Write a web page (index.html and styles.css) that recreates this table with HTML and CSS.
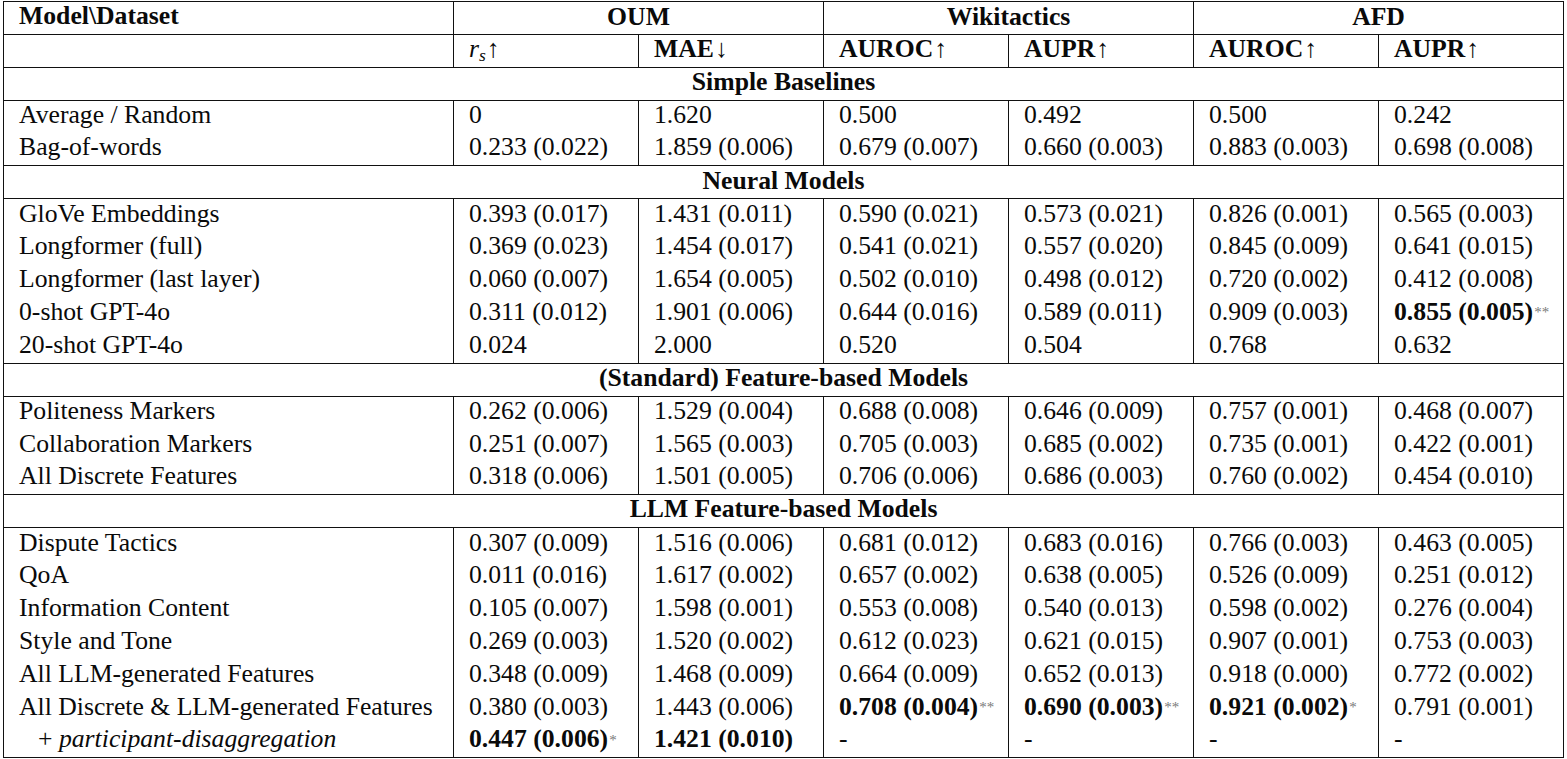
FILE: index.html
```html
<!DOCTYPE html>
<html>
<head>
<meta charset="utf-8">
<link rel="stylesheet" href="styles.css">
</head>
<body>
<table class="results">
  <colgroup>
    <col class="c-model">
    <col class="c-val"><col class="c-val"><col class="c-val"><col class="c-val"><col class="c-val"><col class="c-val">
  </colgroup>
  <tbody>
    <tr class="head">
      <th class="left vr">Model\Dataset</th>
      <th colspan="2" class="center vr">OUM</th>
      <th colspan="2" class="center vr">Wikitactics</th>
      <th colspan="2" class="center">AFD</th>
    </tr>
    <tr class="head sub">
      <th class="vr"></th>
      <th class="vr plain"><i>r</i><sub><i>s</i></sub><span class="arr">↑</span></th>
      <th class="vr">MAE<span class="arr">↓</span></th>
      <th class="vr">AUROC<span class="arr">↑</span></th>
      <th class="vr">AUPR<span class="arr">↑</span></th>
      <th class="vr">AUROC<span class="arr">↑</span></th>
      <th>AUPR<span class="arr">↑</span></th>
    </tr>

    <tr class="section"><td colspan="7">Simple Baselines</td></tr>
    <tr><td>Average / Random</td><td>0</td><td>1.620</td><td>0.500</td><td>0.492</td><td>0.500</td><td>0.242</td></tr>
    <tr><td>Bag-of-words</td><td>0.233 (0.022)</td><td>1.859 (0.006)</td><td>0.679 (0.007)</td><td>0.660 (0.003)</td><td>0.883 (0.003)</td><td>0.698 (0.008)</td></tr>

    <tr class="section"><td colspan="7">Neural Models</td></tr>
    <tr><td>GloVe Embeddings</td><td>0.393 (0.017)</td><td>1.431 (0.011)</td><td>0.590 (0.021)</td><td>0.573 (0.021)</td><td>0.826 (0.001)</td><td>0.565 (0.003)</td></tr>
    <tr><td>Longformer (full)</td><td>0.369 (0.023)</td><td>1.454 (0.017)</td><td>0.541 (0.021)</td><td>0.557 (0.020)</td><td>0.845 (0.009)</td><td>0.641 (0.015)</td></tr>
    <tr><td>Longformer (last layer)</td><td>0.060 (0.007)</td><td>1.654 (0.005)</td><td>0.502 (0.010)</td><td>0.498 (0.012)</td><td>0.720 (0.002)</td><td>0.412 (0.008)</td></tr>
    <tr><td>0-shot GPT-4o</td><td>0.311 (0.012)</td><td>1.901 (0.006)</td><td>0.644 (0.016)</td><td>0.589 (0.011)</td><td>0.909 (0.003)</td><td><b>0.855 (0.005)</b><span class="sig">**</span></td></tr>
    <tr><td>20-shot GPT-4o</td><td>0.024</td><td>2.000</td><td>0.520</td><td>0.504</td><td>0.768</td><td>0.632</td></tr>

    <tr class="section"><td colspan="7">(Standard) Feature-based Models</td></tr>
    <tr><td>Politeness Markers</td><td>0.262 (0.006)</td><td>1.529 (0.004)</td><td>0.688 (0.008)</td><td>0.646 (0.009)</td><td>0.757 (0.001)</td><td>0.468 (0.007)</td></tr>
    <tr><td>Collaboration Markers</td><td>0.251 (0.007)</td><td>1.565 (0.003)</td><td>0.705 (0.003)</td><td>0.685 (0.002)</td><td>0.735 (0.001)</td><td>0.422 (0.001)</td></tr>
    <tr><td>All Discrete Features</td><td>0.318 (0.006)</td><td>1.501 (0.005)</td><td>0.706 (0.006)</td><td>0.686 (0.003)</td><td>0.760 (0.002)</td><td>0.454 (0.010)</td></tr>

    <tr class="section"><td colspan="7">LLM Feature-based Models</td></tr>
    <tr><td>Dispute Tactics</td><td>0.307 (0.009)</td><td>1.516 (0.006)</td><td>0.681 (0.012)</td><td>0.683 (0.016)</td><td>0.766 (0.003)</td><td>0.463 (0.005)</td></tr>
    <tr><td>QoA</td><td>0.011 (0.016)</td><td>1.617 (0.002)</td><td>0.657 (0.002)</td><td>0.638 (0.005)</td><td>0.526 (0.009)</td><td>0.251 (0.012)</td></tr>
    <tr><td>Information Content</td><td>0.105 (0.007)</td><td>1.598 (0.001)</td><td>0.553 (0.008)</td><td>0.540 (0.013)</td><td>0.598 (0.002)</td><td>0.276 (0.004)</td></tr>
    <tr><td>Style and Tone</td><td>0.269 (0.003)</td><td>1.520 (0.002)</td><td>0.612 (0.023)</td><td>0.621 (0.015)</td><td>0.907 (0.001)</td><td>0.753 (0.003)</td></tr>
    <tr><td>All LLM-generated Features</td><td>0.348 (0.009)</td><td>1.468 (0.009)</td><td>0.664 (0.009)</td><td>0.652 (0.013)</td><td>0.918 (0.000)</td><td>0.772 (0.002)</td></tr>
    <tr><td>All Discrete &amp; LLM-generated Features</td><td>0.380 (0.003)</td><td>1.443 (0.006)</td><td><b>0.708 (0.004)</b><span class="sig">**</span></td><td><b>0.690 (0.003)</b><span class="sig">**</span></td><td><b>0.921 (0.002)</b><span class="sig">*</span></td><td>0.791 (0.001)</td></tr>
    <tr class="last"><td class="indent"><span class="plus">+</span> <i>participant-disaggregation</i></td><td><b>0.447 (0.006)</b><span class="sig">*</span></td><td><b>1.421 (0.010)</b></td><td>-</td><td>-</td><td>-</td><td>-</td></tr>
  </tbody>
</table>
</body>
</html>
```

FILE: styles.css
```css
html, body {
  margin: 0;
  padding: 0;
  background: #ffffff;
}

body {
  padding: 1px 0 0 3px;
  font-family: "Liberation Serif", "Times New Roman", serif;
  color: #0a0a0a;
}

.results {
  border-collapse: collapse;
  table-layout: fixed;
  width: 1561px;
  font-size: 25.7px;
  border: 1px solid #111111;
}

.c-model { width: 450px; }
.c-val { width: 185px; }

.results td,
.results th {
  height: 32.9px;
  padding: 0 0 4px 15px;
  line-height: 1;
  text-align: left;
  vertical-align: middle;
  white-space: nowrap;
  border-left: 1px solid #111111;
  box-sizing: border-box;
}

.results th {
  font-weight: bold;
}

.results .center {
  text-align: center;
  padding: 0 0 2px 0;
}

.head th {
  border-bottom: 1px solid #111111;
}

.head th.plain {
  font-weight: normal;
}

.arr {
  font-weight: normal;
  font-family: "Liberation Serif", "Times New Roman", serif;
  font-size: 1em;
  margin-left: 1px;
}

sub {
  font-size: 0.68em;
  line-height: 0;
  vertical-align: -0.22em;
}

.section td {
  text-align: center;
  font-weight: bold;
  padding: 0 0 4px 0;
  border-top: 1px solid #111111;
  border-bottom: 1px solid #111111;
}

.sig {
  font-size: 15px;
  color: #7a7a7a;
  vertical-align: 0.18em;
  margin-left: 1px;
}

.indent {
  padding-left: 34px !important;
}

.plus {
  font-style: normal;
}
```
